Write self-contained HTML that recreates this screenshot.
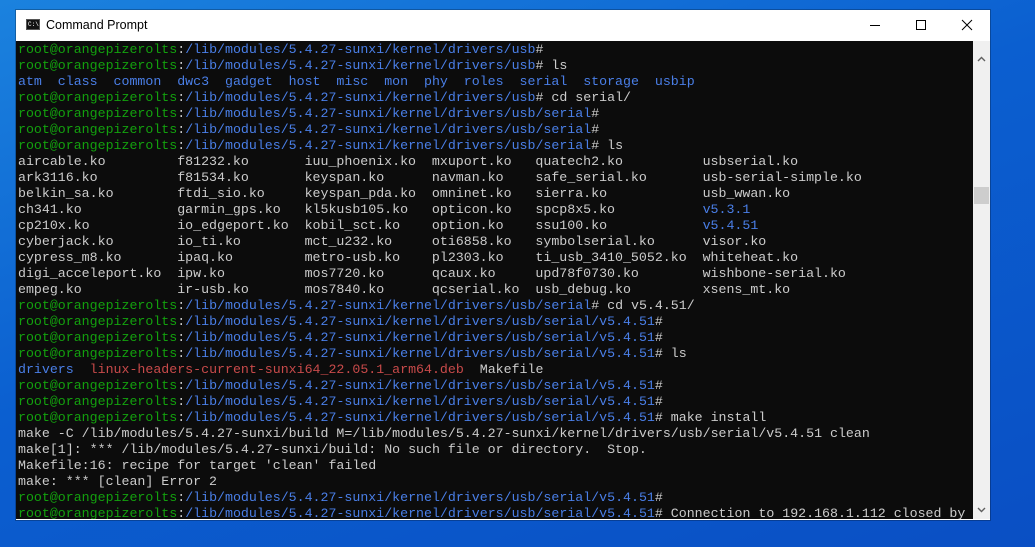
<!DOCTYPE html>
<html><head><meta charset="utf-8"><style>
html,body{margin:0;padding:0;width:1035px;height:547px;overflow:hidden;background:linear-gradient(160deg,#1b82de 0%,#0b5fd0 45%,#0a4fc4 100%);font-family:"Liberation Sans",sans-serif}
.win{position:absolute;left:16px;top:10px;width:974px;height:510px;background:#fff;box-shadow:0 0 0 1px rgba(0,0,0,.25)}
.title{position:absolute;left:0;top:0;width:974px;height:31px;background:#fff}
.title .t{position:absolute;left:30px;top:8px;font-size:12.5px;color:#000}
.icon{position:absolute;left:10px;top:9px;width:14px;height:11px;background:#111;border:1px solid #555;box-sizing:border-box}
.icon:after{content:"C:\\";position:absolute;left:1px;top:1px;font:6px "Liberation Mono",monospace;color:#fff}
.btn{position:absolute;top:0;width:46px;height:31px}
.term{position:absolute;left:0;top:31px;width:957px;height:478px;background:#0c0c0c;overflow:hidden}
.sb{position:absolute;left:957px;top:31px;width:17px;height:478px;background:#f0f0f0}
.thumb{position:absolute;left:1px;top:146px;width:15px;height:17px;background:#cdcdcd}
pre{margin:0;padding:1px 0 0 2px;font:13.28px/16px "Liberation Mono",monospace;color:#cccccc}
.g{color:#13a10e}.b{color:#4a7fe8}.r{color:#c84a4a}
.c{display:inline-block}
.c1{width:20ch}.c2{width:16ch}.c3{width:16ch}.c4{width:13ch}.c5{width:21ch}
</style></head><body>
<div class="win">
 <div class="title"><div class="icon"></div><div class="t">Command Prompt</div>
  <svg class="btn" style="left:836px" viewBox="0 0 46 31"><path d="M18 15.5h10" stroke="#000" stroke-width="1"/></svg>
  <svg class="btn" style="left:882px" viewBox="0 0 46 31"><rect x="18.5" y="10.5" width="9" height="9" fill="none" stroke="#000"/></svg>
  <svg class="btn" style="left:928px" viewBox="0 0 46 31"><path d="M18 10l10 10M28 10l-10 10" stroke="#000" stroke-width="1"/></svg>
 </div>
 <div class="term"><pre><span class="g">root@orangepizerolts</span>:<span class="b">/lib/modules/5.4.27-sunxi/kernel/drivers/usb</span>#
<span class="g">root@orangepizerolts</span>:<span class="b">/lib/modules/5.4.27-sunxi/kernel/drivers/usb</span># ls
<span class="b">atm  class  common  dwc3  gadget  host  misc  mon  phy  roles  serial  storage  usbip</span>
<span class="g">root@orangepizerolts</span>:<span class="b">/lib/modules/5.4.27-sunxi/kernel/drivers/usb</span># cd serial/
<span class="g">root@orangepizerolts</span>:<span class="b">/lib/modules/5.4.27-sunxi/kernel/drivers/usb/serial</span>#
<span class="g">root@orangepizerolts</span>:<span class="b">/lib/modules/5.4.27-sunxi/kernel/drivers/usb/serial</span>#
<span class="g">root@orangepizerolts</span>:<span class="b">/lib/modules/5.4.27-sunxi/kernel/drivers/usb/serial</span># ls
<span class="c c1">aircable.ko</span><span class="c c2">f81232.ko</span><span class="c c3">iuu_phoenix.ko</span><span class="c c4">mxuport.ko</span><span class="c c5">quatech2.ko</span>usbserial.ko
<span class="c c1">ark3116.ko</span><span class="c c2">f81534.ko</span><span class="c c3">keyspan.ko</span><span class="c c4">navman.ko</span><span class="c c5">safe_serial.ko</span>usb-serial-simple.ko
<span class="c c1">belkin_sa.ko</span><span class="c c2">ftdi_sio.ko</span><span class="c c3">keyspan_pda.ko</span><span class="c c4">omninet.ko</span><span class="c c5">sierra.ko</span>usb_wwan.ko
<span class="c c1">ch341.ko</span><span class="c c2">garmin_gps.ko</span><span class="c c3">kl5kusb105.ko</span><span class="c c4">opticon.ko</span><span class="c c5">spcp8x5.ko</span><span class="b">v5.3.1</span>
<span class="c c1">cp210x.ko</span><span class="c c2">io_edgeport.ko</span><span class="c c3">kobil_sct.ko</span><span class="c c4">option.ko</span><span class="c c5">ssu100.ko</span><span class="b">v5.4.51</span>
<span class="c c1">cyberjack.ko</span><span class="c c2">io_ti.ko</span><span class="c c3">mct_u232.ko</span><span class="c c4">oti6858.ko</span><span class="c c5">symbolserial.ko</span>visor.ko
<span class="c c1">cypress_m8.ko</span><span class="c c2">ipaq.ko</span><span class="c c3">metro-usb.ko</span><span class="c c4">pl2303.ko</span><span class="c c5">ti_usb_3410_5052.ko</span>whiteheat.ko
<span class="c c1">digi_acceleport.ko</span><span class="c c2">ipw.ko</span><span class="c c3">mos7720.ko</span><span class="c c4">qcaux.ko</span><span class="c c5">upd78f0730.ko</span>wishbone-serial.ko
<span class="c c1">empeg.ko</span><span class="c c2">ir-usb.ko</span><span class="c c3">mos7840.ko</span><span class="c c4">qcserial.ko</span><span class="c c5">usb_debug.ko</span>xsens_mt.ko
<span class="g">root@orangepizerolts</span>:<span class="b">/lib/modules/5.4.27-sunxi/kernel/drivers/usb/serial</span># cd v5.4.51/
<span class="g">root@orangepizerolts</span>:<span class="b">/lib/modules/5.4.27-sunxi/kernel/drivers/usb/serial/v5.4.51</span>#
<span class="g">root@orangepizerolts</span>:<span class="b">/lib/modules/5.4.27-sunxi/kernel/drivers/usb/serial/v5.4.51</span>#
<span class="g">root@orangepizerolts</span>:<span class="b">/lib/modules/5.4.27-sunxi/kernel/drivers/usb/serial/v5.4.51</span># ls
<span class="b">drivers</span>  <span class="r">linux-headers-current-sunxi64_22.05.1_arm64.deb</span>  Makefile
<span class="g">root@orangepizerolts</span>:<span class="b">/lib/modules/5.4.27-sunxi/kernel/drivers/usb/serial/v5.4.51</span>#
<span class="g">root@orangepizerolts</span>:<span class="b">/lib/modules/5.4.27-sunxi/kernel/drivers/usb/serial/v5.4.51</span>#
<span class="g">root@orangepizerolts</span>:<span class="b">/lib/modules/5.4.27-sunxi/kernel/drivers/usb/serial/v5.4.51</span># make install
make -C /lib/modules/5.4.27-sunxi/build M=/lib/modules/5.4.27-sunxi/kernel/drivers/usb/serial/v5.4.51 clean
make[1]: *** /lib/modules/5.4.27-sunxi/build: No such file or directory.  Stop.
Makefile:16: recipe for target 'clean' failed
make: *** [clean] Error 2
<span class="g">root@orangepizerolts</span>:<span class="b">/lib/modules/5.4.27-sunxi/kernel/drivers/usb/serial/v5.4.51</span>#
<span class="g">root@orangepizerolts</span>:<span class="b">/lib/modules/5.4.27-sunxi/kernel/drivers/usb/serial/v5.4.51</span># Connection to 192.168.1.112 closed by</pre></div>
 <div class="sb">
  <svg style="position:absolute;left:4px;top:15px" width="9" height="6" viewBox="0 0 9 6"><path d="M1 5l3.5-3.5L8 5" fill="none" stroke="#606060" stroke-width="1.4"/></svg>
  <div class="thumb"></div>
  <svg style="position:absolute;left:4px;top:466px" width="9" height="6" viewBox="0 0 9 6"><path d="M1 1l3.5 3.5L8 1" fill="none" stroke="#606060" stroke-width="1.4"/></svg>
 </div>
</div>
</body></html>
